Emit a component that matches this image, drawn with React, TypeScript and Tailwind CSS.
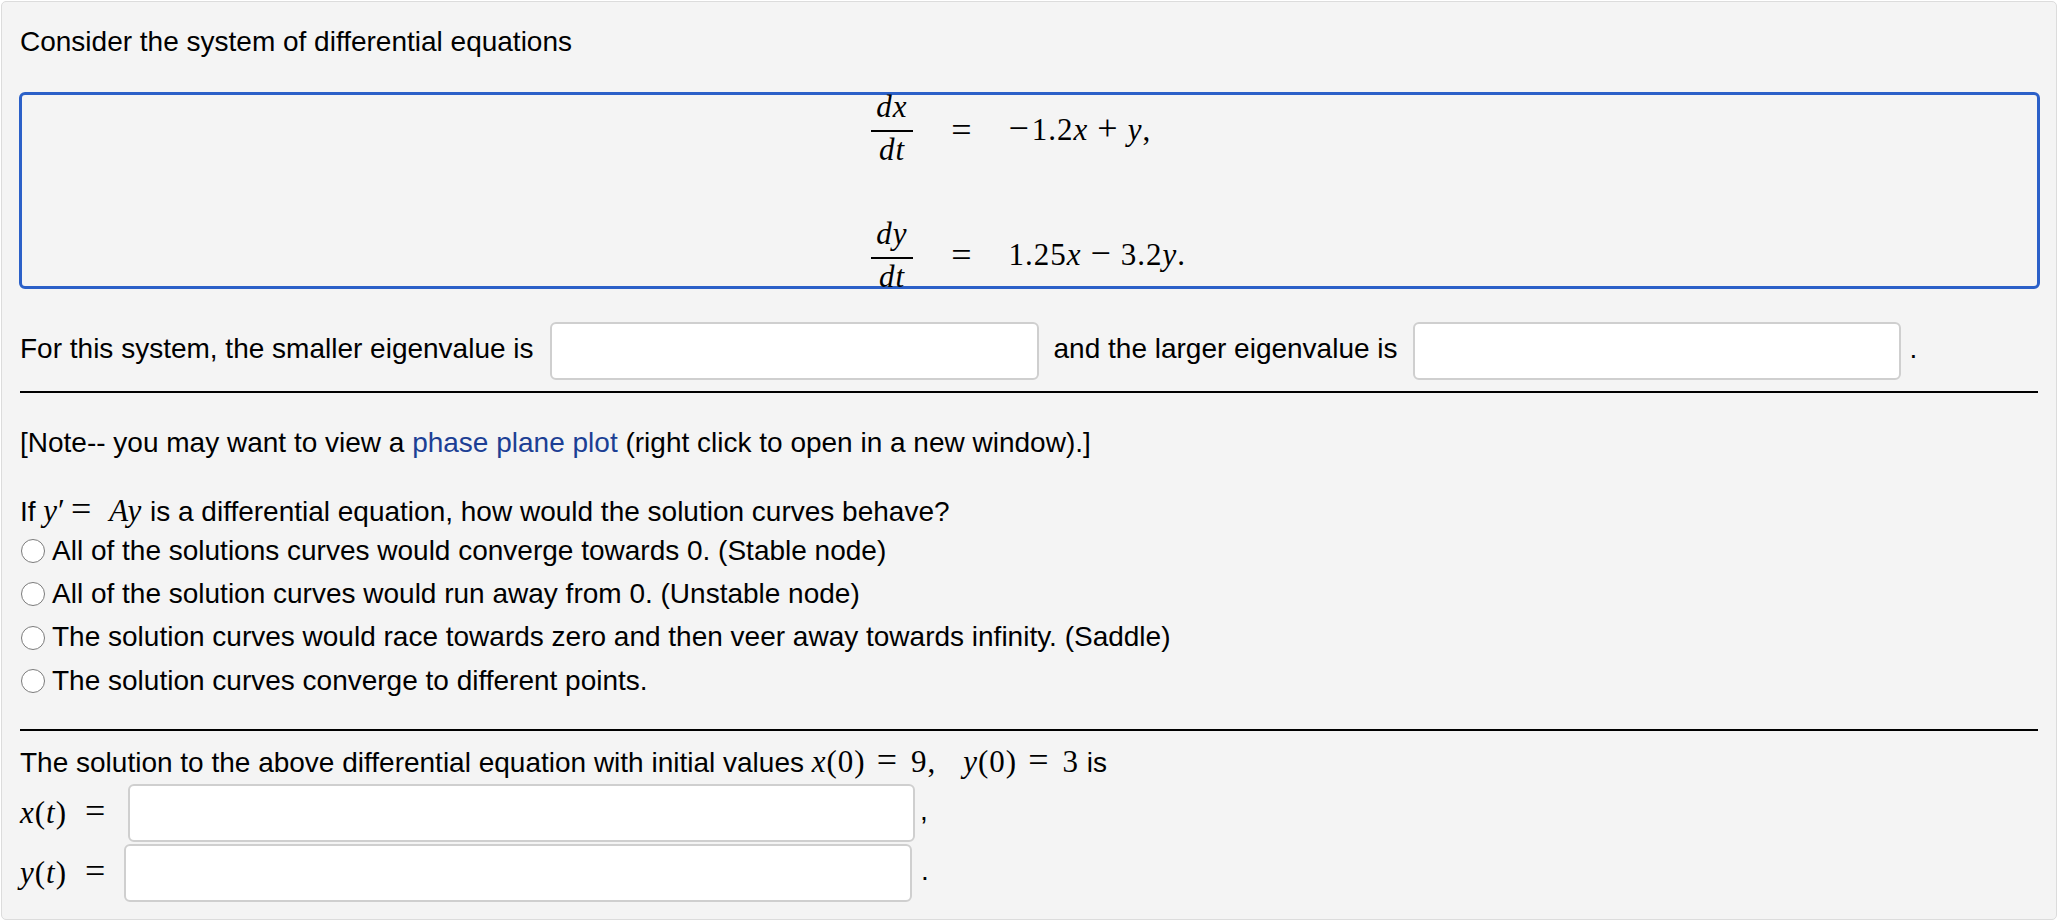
import type { ReactNode } from "react";

const serif = "font-['Liberation_Serif','Times_New_Roman',serif] tracking-[1px]";

function M({ children, className = "" }: { children: ReactNode; className?: string }) {
  return <span className={`${serif} text-[31px] leading-[31px] ${className}`}>{children}</span>;
}

// operators are drawn a bit larger, like the TeX font does
function Op({ c, className = "" }: { c: string; className?: string }) {
  return <span className={`text-[36px] leading-[0] ${className}`}>{c}</span>;
}

function Frac({ num, den }: { num: ReactNode; den: ReactNode }) {
  return (
    <span className="-mt-[4px] flex w-[42px] shrink-0 flex-col items-center">
      <span className="h-[31px] pl-[1px]">{num}</span>
      <span className="mt-[8px] h-[1.5px] w-full bg-black" />
      <span className="mt-[2.5px] h-[31px] pl-[1px]">{den}</span>
    </span>
  );
}

function Field({ className = "" }: { className?: string }) {
  return (
    <input
      type="text"
      className={`h-[58px] shrink-0 rounded-[6px] border-2 border-[#cfcfcf] bg-white px-3 outline-none ${className}`}
    />
  );
}

const options = [
  "All of the solutions curves would converge towards 0. (Stable node)",
  "All of the solution curves would run away from 0. (Unstable node)",
  "The solution curves would race towards zero and then veer away towards infinity. (Saddle)",
  "The solution curves converge to different points.",
];

export default function App() {
  return (
    <div className="min-h-screen bg-white p-[1px]">
      <div className="w-[2056px] rounded-[5px] border border-[#dcdcdc] bg-[#f4f4f4] px-[18px] pb-[17px] pt-[23px] font-['Liberation_Sans',Arial,Helvetica,sans-serif] text-[28px] leading-[34px] text-black">
        <p>Consider the system of differential equations</p>

        <div className="-mr-[2px] -ml-[1px] mt-[33px] flex h-[197px] flex-col items-center rounded-[6px] border-[3px] border-[#2b60c8]">
          <div className={`${serif} flex h-[127px] w-[318px] shrink-0 items-start text-[31px] leading-[31px]`}>
            <Frac num={<><i>d</i><i>x</i></>} den={<><i>d</i><i>t</i></>} />
            <span className="ml-[38px] mt-[21px] w-[23px] text-center">
              <Op c="=" />
            </span>
            <span className="ml-[35px] mt-[19px] whitespace-nowrap">
              <Op c="−" className="mr-[2px]" />1.2<i>x</i>
              <Op c="+" className="mx-[9px]" />
              <i>y</i>,
            </span>
          </div>
          <div className={`${serif} flex w-[318px] shrink-0 items-start text-[31px] leading-[31px]`}>
            <Frac num={<><i>d</i><i>y</i></>} den={<><i>d</i><i>t</i></>} />
            <span className="ml-[38px] mt-[19px] w-[23px] text-center">
              <Op c="=" />
            </span>
            <span className="ml-[35px] mt-[17px] whitespace-nowrap">
              1.25<i>x</i>
              <Op c="−" className="mx-[9px]" />
              3.2<i>y</i>.
            </span>
          </div>
        </div>

        <div className="mt-[33px] flex h-[58px] items-center whitespace-nowrap">
          <span className="pb-[5px]">For this system, the smaller eigenvalue is</span>
          <Field className="ml-[16px] w-[489px]" />
          <span className="ml-[15px] pb-[5px]">and the larger eigenvalue is</span>
          <Field className="ml-[15px] w-[488px]" />
          <span className="ml-[9px] pb-[5px]">.</span>
        </div>

        <div className="mt-[11px] h-[2px] bg-black" />

        <p className="mt-[33px]">
          [Note-- you may want to view a <a className="text-[#1c3f94]">phase plane plot</a> (right click to open in a
          new window).]
        </p>

        <p className="mt-[35px]">
          If{" "}
          <M>
            <i>y</i>′<Op c="=" className="ml-[5px] mr-[17px]" />
            <i>A</i>
            <i>y</i>
          </M>{" "}
          is a differential equation, how would the solution curves behave?
        </p>

        <div>
          {options.map((o) => (
            <div key={o} className="flex h-[43.33px] items-center">
              <span className="ml-[1px] mt-[1px] h-[24px] w-[24px] shrink-0 rounded-full border-[1.5px] border-[#7b7b7b] bg-white" />
              <span className="ml-[7px] whitespace-nowrap">{o}</span>
            </div>
          ))}
        </div>

        <div className="mt-[27px] h-[2px] bg-black" />

        <p className="mt-[15px]">
          The solution to the above differential equation with initial values{" "}
          <M>
            <i>x</i>(0)
            <Op c="=" className="ml-[11px] mr-[13px]" />
            9,
            <i className="ml-[27px]">y</i>(0)
            <Op c="=" className="ml-[11px] mr-[13px]" />3
          </M>{" "}
          is
        </p>

        <div className="mt-[4px] flex h-[58px] items-center">
          <M className="w-[108px] shrink-0 whitespace-nowrap pb-[2px]">
            <i>x</i>(<i>t</i>)
            <Op c="=" className="ml-[18px]" />
          </M>
          <Field className="w-[787px]" />
          <span className="ml-[5px] pb-[5px]">,</span>
        </div>

        <div className="mt-[2px] flex h-[58px] items-center">
          <M className="w-[104px] shrink-0 whitespace-nowrap pb-[2px]">
            <i>y</i>(<i>t</i>)
            <Op c="=" className="ml-[18px]" />
          </M>
          <Field className="w-[788px]" />
          <span className="ml-[9px] pb-[5px]">.</span>
        </div>
      </div>
    </div>
  );
}
